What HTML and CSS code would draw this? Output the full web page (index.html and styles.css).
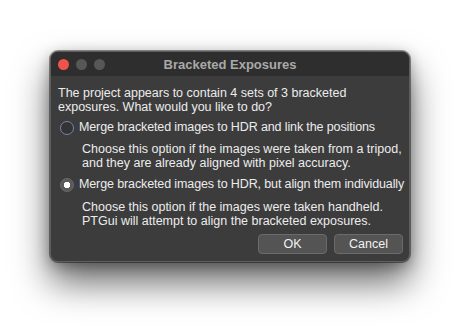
FILE: index.html
```html
<!DOCTYPE html>
<html lang="en">
<head>
    <meta charset="UTF-8">
    <title>Bracketed Exposures</title>
    <link rel="stylesheet" href="styles.css">
</head>
<body>
    <div class="window">
        <div class="titlebar">
            <div class="lights">
                <span class="light red"></span>
                <span class="light"></span>
                <span class="light"></span>
            </div>
            <div class="title">Bracketed Exposures</div>
        </div>
        <div class="content">
            <p class="intro">The project appears to contain 4 sets of 3 bracketed<br>exposures. What would you like to do?</p>
            <label class="option first">
                <span class="radio"></span>
                Merge bracketed images to HDR and link the positions
            </label>
            <p class="desc">Choose this option if the images were taken from a tripod,<br>and they are already aligned with pixel accuracy.</p>
            <label class="option">
                <span class="radio checked"></span>
                Merge bracketed images to HDR, but align them individually
            </label>
            <p class="desc last">Choose this option if the images were taken handheld.<br>PTGui will attempt to align the bracketed exposures.</p>
            <div class="buttons">
                <button class="btn">OK</button>
                <button class="btn">Cancel</button>
            </div>
        </div>
    </div>
</body>
</html>
```

FILE: styles.css
```css
* { box-sizing: border-box; }
body {
    margin: 0;
    padding: 51px 0 0 50px;
    background: #fff;
    font-family: 'Liberation Sans', Arial, sans-serif;
    height: 330px;
    overflow: hidden;
}
.window {
    width: 360px;
    height: 211px;
    background: #3c3c3c;
    border-radius: 8px;
    border: 1px solid #5e5e5e;
    box-shadow: 0 20px 36px rgba(0,0,0,0.6), 0 4px 14px rgba(0,0,0,0.3), 0 0 0 1px rgba(0,0,0,0.4);
    overflow: hidden;
    display: flex;
    flex-direction: column;
}
.titlebar {
    flex: none;
    height: 24px;
    background: #2e2e2e;
    display: flex;
    align-items: center;
    position: relative;
}
.lights {
    display: flex;
    gap: 7px;
    padding-left: 7px;
}
.light {
    width: 11px;
    height: 11px;
    border-radius: 50%;
    background: #575757;
}
.light.red {
    background: #f0524c;
}
.title {
    position: absolute;
    left: 0; right: 0;
    text-align: center;
    font-size: 13px;
    font-weight: 700;
    color: #a9a9a9;
}
.content {
    padding: 11px 6px 0 7px;
    color: #ececec;
    font-size: 12.5px;
    line-height: 13.5px;
    white-space: nowrap;
}
.intro {
    margin: 0;
}
.option {
    display: flex;
    align-items: center;
    gap: 5px;
    margin-top: 8px;
    margin-left: 2px;
    letter-spacing: -0.12px;
}
.option.first {
    margin-top: 7px;
}
.radio {
    width: 14px;
    height: 14px;
    border-radius: 50%;
    border: 1.5px solid #7c82ad;
    background: #333;
    flex: none;
}
.radio.checked {
    border: 1.5px solid #6a6a6a;
    background: radial-gradient(circle, #fff 0 3px, #5a5a5a 3.5px);
}
.desc {
    margin: 8px 0 0 24px;
}
.desc.last {
    margin-top: 9px;
}
.buttons {
    display: flex;
    justify-content: flex-end;
    gap: 7px;
    margin-top: 6px;
}
.btn {
    width: 69px;
    height: 20px;
    background: #545454;
    border: 1px solid #6b6b6b;
    border-radius: 4px;
    color: #f2f2f2;
    font-family: inherit;
    font-size: 12.5px;
    padding: 0;
}
```
